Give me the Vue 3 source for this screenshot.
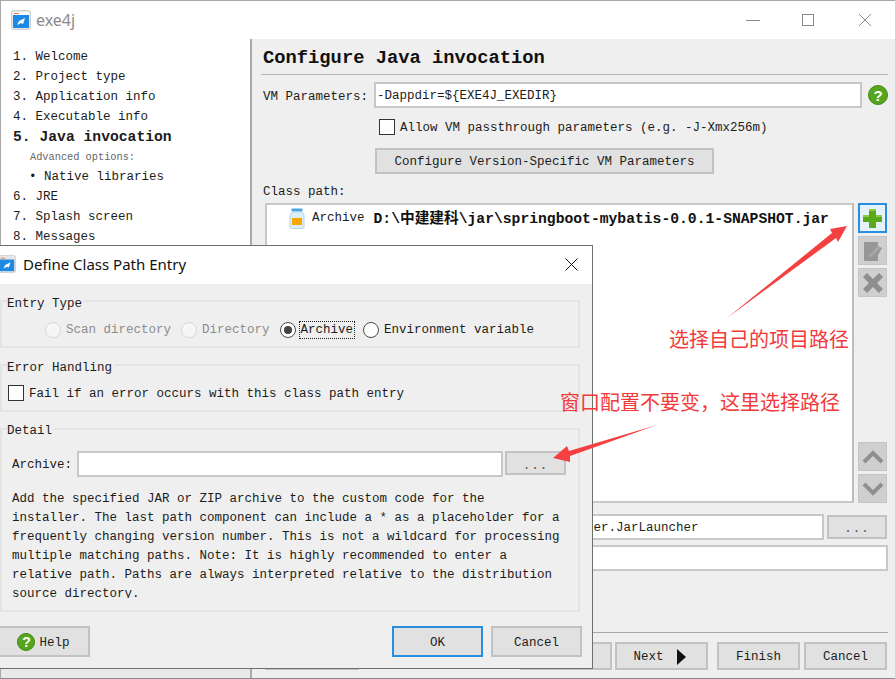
<script setup>
const steps = [
  { t: '1. Welcome' }, { t: '2. Project type' }, { t: '3. Application info' }, { t: '4. Executable info' },
  { t: '5. Java invocation', c: 'bold' }, { t: 'Advanced options:', c: 'adv' }, { t: '• Native libraries', c: 'sub' },
  { t: '6. JRE' }, { t: '7. Splash screen' }, { t: '8. Messages' }
]
const desc = [
  'Add the specified JAR or ZIP archive to the custom code for the',
  'installer. The last path component can include a * as a placeholder for a',
  'frequently changing version number. This is not a wildcard for processing',
  'multiple matching paths. Note: It is highly recommended to enter a',
  'relative path. Paths are always interpreted relative to the distribution',
  'source directory.'
]
</script>

<template>
  <div class="desk">
    <section class="win">
      <header class="title">
        <svg class="appicon" width="20" height="20" viewBox="0 0 20 20">
          <rect x="0.5" y="0.5" width="19" height="19" rx="2" fill="#e6e6e6" stroke="#cfcfcf" />
          <rect x="2" y="2" width="16" height="3" fill="#fff" />
          <rect x="3" y="3" width="5" height="1" fill="#e8734a" />
          <rect x="2" y="5" width="16" height="13" fill="#1e88e5" />
          <path d="M6 15l2-4 6-3-2 6-2-1z" fill="#fff" />
        </svg>
        <span class="apptitle">exe4j</span>
        <div class="controls">
          <svg width="14" height="14" viewBox="0 0 14 14"><path d="M0 7.5h14" stroke="#8a8a8a" /></svg>
          <svg width="14" height="14" viewBox="0 0 14 14"><rect x="0.5" y="1.5" width="11" height="11" fill="none" stroke="#8a8a8a" /></svg>
          <svg width="14" height="14" viewBox="0 0 14 14"><path d="M1 1l12 12M13 1L1 13" stroke="#8a8a8a" /></svg>
        </div>
      </header>
      <div class="winbody">
        <aside class="side">
          <ul class="steps">
            <li v-for="s in steps" :key="s.t" :class="s.c">{{ s.t }}</li>
          </ul>
          <div class="sidefoot"></div>
        </aside>
        <main class="panel">
          <h1 class="head">Configure Java invocation</h1>
          <div class="vmrow">
            <label class="vmlabel">VM Parameters:</label>
            <div class="field vmfield">-Dappdir=${EXE4J_EXEDIR}</div>
            <span class="help big">?</span>
          </div>
          <div class="allow"><span class="check"></span><span class="nudge">Allow VM passthrough parameters (e.g. -J-Xmx256m)</span></div>
          <button class="btn verbtn">Configure Version-Specific VM Parameters</button>
          <div class="cplabel">Class path:</div>
          <div class="cprow">
            <div class="cplist">
              <div class="cpitem">
                <svg width="16" height="21" viewBox="0 0 16 21">
                  <rect x="2.5" y="0.5" width="11" height="3" rx="1" fill="#4aa3e0" />
                  <path d="M3 4h10l2 3v12a1.500 1.500 0 0 1-1.500 1.500h-11A1.500 1.500 0 0 1 1 19V7z" fill="#dcedf8" stroke="#b5d6ea" />
                  <rect x="3" y="10" width="10" height="7" fill="#f5a800" />
                </svg>
                <span class="arch">Archive</span>
                <b class="path">D:\中建建科\jar\springboot-mybatis-0.0.1-SNAPSHOT.jar</b>
              </div>
            </div>
            <div class="sidebtns">
              <button class="ibtn active">
                <svg width="21" height="21" viewBox="0 0 21 21"><path d="M7 1h7v6h6v7h-6v6H7v-6H1V7h6z" fill="#5aa81c" /><path d="M7 1h7v2H7zM1 7h6v2H1zM14 7h6v2h-6z" fill="#8ccb4a" /></svg>
              </button>
              <button class="ibtn">
                <svg width="21" height="22" viewBox="0 0 21 22"><path d="M2 2h14v4l4 2-4 7v6H2z" fill="#979797" /><path d="M7 16l9-10 2 2-9 9z" fill="#ababab" /></svg>
              </button>
              <button class="ibtn">
                <svg width="22" height="22" viewBox="0 0 22 22"><path d="M1 5l4-4 6 6 6-6 4 4-6 6 6 6-4 4-6-6-6 6-4-4 6-6z" fill="#8f8f8f" /></svg>
              </button>
              <div class="grow"></div>
              <button class="ibtn">
                <svg width="22" height="14" viewBox="0 0 22 14"><path d="M2 12l9-9 9 9" fill="none" stroke="#8f8f8f" stroke-width="4" /></svg>
              </button>
              <button class="ibtn">
                <svg width="22" height="14" viewBox="0 0 22 14"><path d="M2 2l9 9 9-9" fill="none" stroke="#8f8f8f" stroke-width="4" /></svg>
              </button>
            </div>
          </div>
          <div class="mainrow">
            <div class="field mainfield">der.JarLauncher</div>
            <button class="btn dots">...</button>
          </div>
          <div class="field argfield"></div>
          <div class="sep"></div>
          <div class="navrow">
            <button class="btn navhelp"></button>
            <button class="btn back"></button>
            <button class="btn next">Next<svg width="9" height="16" viewBox="0 0 9 16"><path d="M0 0l9 8-9 8z" fill="#111" /></svg></button>
            <button class="btn finish">Finish</button>
            <button class="btn cancel">Cancel</button>
          </div>
        </main>
      </div>
    </section>

    <section class="dlg">
      <header class="dlgtitle">
        <svg class="dlgicon" width="18" height="18" viewBox="0 0 20 20">
          <rect x="0.5" y="0.5" width="19" height="19" rx="2" fill="#e6e6e6" stroke="#cfcfcf" />
          <rect x="3" y="3" width="5" height="1" fill="#e8734a" />
          <rect x="2" y="5" width="16" height="13" fill="#1e88e5" />
          <path d="M6 15l2-4 6-3-2 6-2-1z" fill="#fff" />
        </svg>
        <span class="dlgname">Define Class Path Entry</span>
        <svg class="dlgclose" width="13" height="13" viewBox="0 0 13 13"><path d="M0.500 0.500l12 12M12.500 0.500l-12 12" stroke="#111" /></svg>
      </header>
      <div class="dlgbody">
        <div class="group g1">
          <span class="legend">Entry Type</span>
          <div class="radios">
            <span class="radio off"></span><span class="rl off r1">Scan directory</span>
            <span class="radio off"></span><span class="rl off r2">Directory</span>
            <span class="radio on"></span><span class="rl focus">Archive</span>
            <span class="radio"></span><span class="rl">Environment variable</span>
          </div>
        </div>
        <div class="group g2">
          <span class="legend">Error Handling</span>
          <div class="failrow"><span class="check"></span><span class="nudge">Fail if an error occurs with this class path entry</span></div>
        </div>
        <div class="group g3">
          <span class="legend">Detail</span>
          <div class="archrow">
            <span class="archlabel">Archive:</span>
            <div class="field archfield"></div>
            <button class="btn archdots">...</button>
          </div>
          <div class="desc"><div v-for="l in desc" :key="l">{{ l }}</div></div>
        </div>
        <div class="dlgbtns">
          <button class="btn dhelp"><span class="help">?</span>Help</button>
          <button class="btn ok">OK</button>
          <button class="btn dcancel">Cancel</button>
        </div>
      </div>
    </section>

    <svg class="marks" width="895" height="679" viewBox="0 0 895 679">
      <polygon points="727,318 832,233 830,229 847,226 838,242 836,238" fill="#f44040" />
      <polygon points="657,425 569,451 567,446 553,458 570,462 570,456" fill="#f44040" />
    </svg>
    <div class="note n1">选择自己的项目路径</div>
    <div class="note n2">窗口配置不要变，这里选择路径</div>
  </div>
</template>

<style>
html, body { margin: 0; padding: 0; background: #fff; }
</style>

<style scoped>
* { box-sizing: border-box; }
.desk {
  position: relative;
  width: 895px;
  height: 679px;
  overflow: hidden;
  font-family: "Liberation Mono", "Noto Sans CJK SC", monospace;
  font-size: 12.5px;
  color: #1c1c1c;
}
.win {
  position: absolute;
  inset: 0;
  display: flex;
  flex-direction: column;
  background: #fff;
  border-top: 1px solid #a8a8a8;
  border-left: 1px solid #a8a8a8;
  border-bottom: 1px solid #8a8a8a;
}
.title { height: 38px; display: flex; align-items: center; flex: none; }
.appicon { margin-left: 10px; margin-right: 5px; }
.apptitle { font-family: "Noto Sans", sans-serif; font-size: 16px; color: #8b8b8b; }
.controls { margin-left: auto; display: flex; gap: 42px; margin-right: 23px; margin-top: -1px; }
.winbody { flex: 1; display: flex; min-height: 0; }
.side { width: 249px; display: flex; flex-direction: column; background: #fff; flex: none; }
.steps { list-style: none; margin: 0; padding: 8px 0 0 12px; flex: 1; }
.steps li { height: 20px; line-height: 20px; white-space: pre; }
.steps .bold { font-weight: 700; font-size: 14.7px; }
.steps .adv { font-size: 10.3px; color: #666; padding-left: 17px; }
.steps .sub { padding-left: 16px; }
.sidefoot { height: 9px; background: #e9e9e9; flex: none; }
.panel {
  flex: 1;
  min-width: 0;
  background: #efefef;
  border-left: 2px solid #a9a9a9;
  padding: 0 7px 0 9px;
  display: flex;
  flex-direction: column;
}
.head {
  margin: 0;
  height: 36px;
  padding: 9px 0 0 2px;
  border-bottom: 1px solid #b5b5b5;
  font-size: 18.8px;
  line-height: 20px;
  font-weight: 700;
  color: #111;
  white-space: pre;
}
.vmrow { display: flex; align-items: center; margin-top: 7px; }
.vmlabel { width: 113px; flex: none; padding: 3px 0 0 2px; }
.field {
  height: 26px;
  background: #fff;
  border: 2px solid #c8c8c8;
  padding-left: 1px;
  line-height: 24px;
  white-space: pre;
}
.vmfield { width: 489px; }
.help {
  width: 18px;
  height: 18px;
  border-radius: 50%;
  background: #56a51c;
  border: 1px solid #3f8a10;
  color: #fff;
  font-family: "Liberation Sans", sans-serif;
  font-weight: 700;
  font-size: 14px;
  display: inline-flex;
  align-items: center;
  justify-content: center;
  flex: none;
}
.help.big { width: 20px; height: 20px; margin-left: 6px; font-size: 15px; }
.allow { display: flex; align-items: center; height: 18px; margin: 10px 0 0 118px; gap: 5px; white-space: pre; }
.nudge { padding-top: 2px; }
.check { width: 16px; height: 16px; background: #fff; border: 1px solid #333; flex: none; }
.btn {
  font: inherit;
  color: inherit;
  background: #e1e1e1;
  border: 2px solid #c2c2c2;
  padding: 2px 0 0;
  display: inline-flex;
  align-items: center;
  justify-content: center;
  white-space: pre;
}
.verbtn { width: 339px; height: 26px; margin: 12px 0 0 114px; align-self: flex-start; }
.cplabel { margin: 10px 0 0 2px; height: 17px; line-height: 17px; }
.cprow { display: flex; height: 300px; margin: 2px 1px 0 4px; gap: 4px; }
.cplist { flex: 1; background: #fff; border: 2px solid #c8c8c8; border-right-color: #bdbdbd; }
.cpitem { display: flex; align-items: center; height: 24px; padding-left: 22px; margin-top: 1px; white-space: pre; }
.arch { margin-left: 7px; }
.path { margin: 0 0 4px 9px; font-size: 14.7px; color: #111; }
.sidebtns { width: 29px; display: flex; flex-direction: column; gap: 3px; flex: none; }
.grow { flex: 1; }
.ibtn {
  width: 29px;
  height: 29px;
  padding: 0;
  flex: none;
  background: #cfcfcf;
  border: 1px solid #c5c5c5;
  display: flex;
  align-items: center;
  justify-content: center;
}
.ibtn.active { background: #e5f1fb; border: 2px solid #2a8ede; height: 30px; }
.mainrow { display: flex; gap: 3px; margin: 11px 1px 0 0; align-items: center; }
.mainfield { width: 449px; margin-left: 114px; padding-left: 209px; }
.dots { flex: 1; height: 24px; letter-spacing: 1px; color: #555; padding-top: 4px; }
.argfield { margin: 5px 0 0 114px; }
.sep { height: 1px; background: #a8a8a8; margin-top: 61px; flex: none; }
.navrow { display: flex; height: 28px; margin: 9px 1px 0 4px; }
.navhelp { width: 94px; }
.back { width: 92px; margin-left: auto; }
.next { width: 93px; margin-left: 3px; gap: 13px; padding-right: 4px; }
.finish { width: 83px; margin-left: 9px; }
.cancel { width: 83px; margin-left: 4px; }

.dlg {
  position: absolute;
  left: 0;
  top: 245px;
  width: 593px;
  height: 424px;
  display: flex;
  flex-direction: column;
  border: 1px solid #68736a;
  border-left: 0;
  background: #efefef;
}
.dlgtitle { height: 38px; padding-bottom: 2px; background: #fff; display: flex; align-items: center; flex: none; }
.dlgicon { margin-left: -2px; margin-right: 7px; }
.dlgname { font-family: "Noto Sans", sans-serif; font-size: 15px; color: #111; }
.dlgclose { margin-left: auto; margin-right: 14px; }
.dlgbody { flex: 1; padding: 16px 12px 0 0; display: flex; flex-direction: column; }
.group { position: relative; border: 2px solid #e4e4e4; padding-top: 18px; flex: none; }
.g1 { height: 48px; padding-top: 19px; }
.g2 { height: 48px; margin-top: 16px; }
.g3 { height: 184px; margin-top: 16px; padding-top: 21px; }
.legend {
  position: absolute;
  left: 5px;
  top: -6px;
  padding: 0 2px 0 0;
  height: 16px;
  line-height: 16px;
  background: #efefef;
}
.g3 .legend { top: -7px; }
.radios { display: flex; align-items: center; height: 18px; padding-left: 43px; white-space: pre; }
.radio { width: 16px; height: 16px; border-radius: 50%; background: #fff; border: 1px solid #4a4a4a; flex: none; position: relative; }
.radio.off { background: #f6f6f6; border-color: #d6d6d6; }
.radio.on::after { content: ""; position: absolute; inset: 3px; border-radius: 50%; background: #444; }
.rl { margin-left: 5px; margin-right: 10px; }
.rl.off { color: #8c8c8c; }
.focus { outline: 1px dotted #222; outline-offset: 1px; margin-right: 10px; }
.failrow { display: flex; align-items: center; gap: 5px; height: 18px; padding-left: 6px; white-space: pre; }
.archrow { display: flex; align-items: flex-start; }
.archlabel { width: 75px; padding: 1px 0 0 10px; line-height: 26px; flex: none; }
.archfield { width: 426px; flex: none; }
.archdots { width: 61px; height: 24px; margin-left: 2px; letter-spacing: 1px; color: #555; padding-top: 5px; }
.desc { height: 108px; overflow: hidden; margin-top: 12px; padding-left: 10px; line-height: 19px; white-space: pre; }
.dlgbtns { display: flex; height: 31px; margin-top: 14px; margin-right: -2px; }
.dhelp { width: 91px; margin-left: -1px; gap: 4px; border-left: 0; }
.dhelp .help { margin-top: -2px; }
.ok { width: 91px; margin-left: auto; border-color: #2a8ede; }
.dcancel { width: 91px; margin-left: 8px; }

.marks { position: absolute; left: 0; top: 0; pointer-events: none; }
.note {
  position: absolute;
  font-family: "Noto Sans CJK SC", sans-serif;
  font-size: 20px;
  line-height: 24px;
  color: #f23a3a;
  white-space: pre;
}
.n1 { left: 669px; top: 327px; }
.n2 { left: 560px; top: 390px; }
</style>
